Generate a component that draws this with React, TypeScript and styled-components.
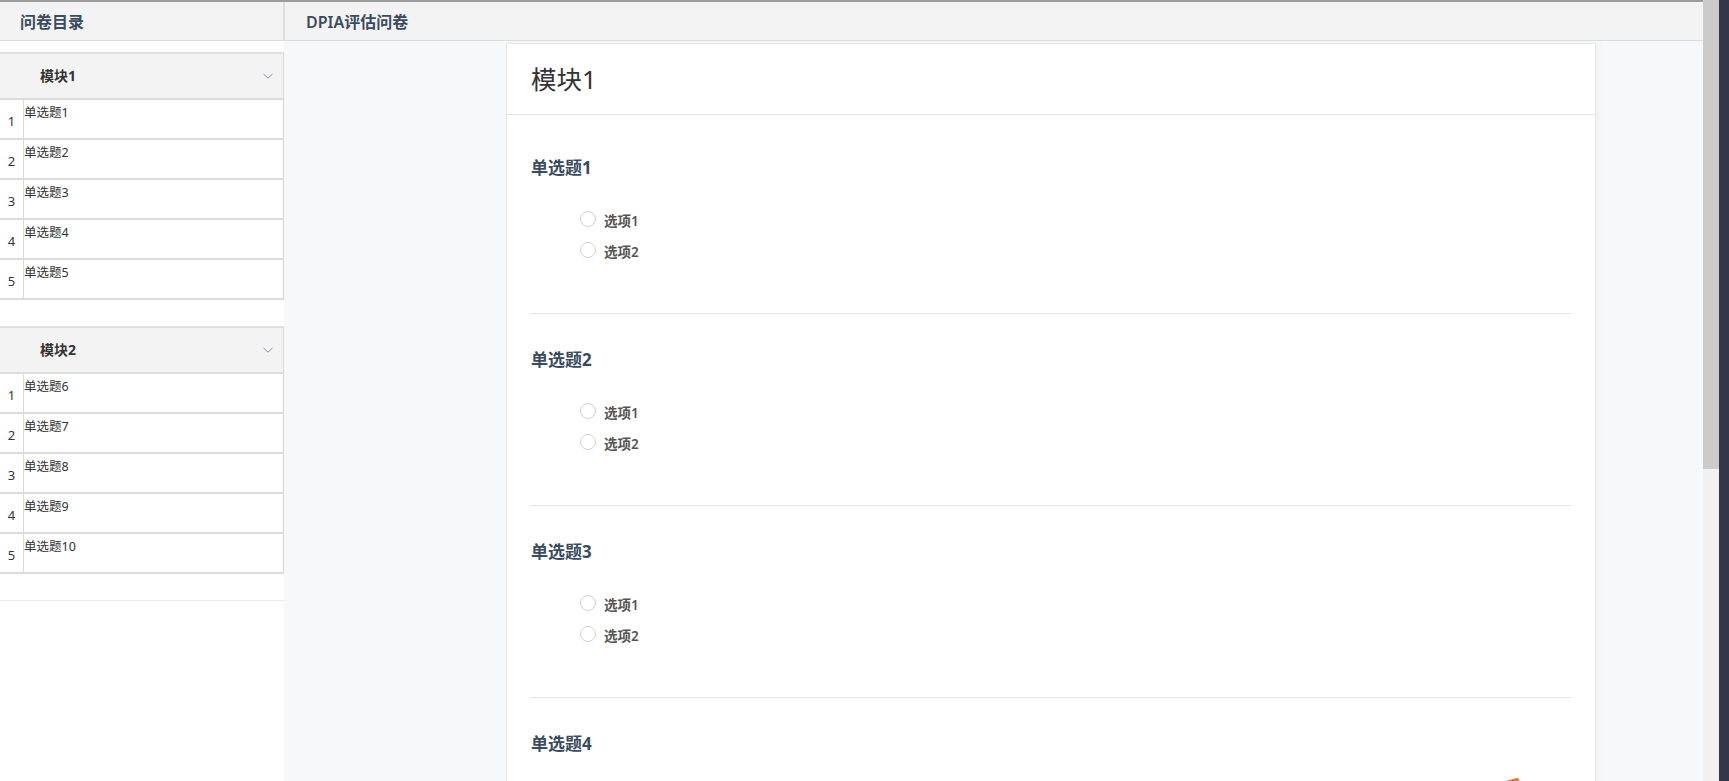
import React from "react";
import styled, { createGlobalStyle } from "styled-components";

const GlobalStyle = createGlobalStyle`
  html, body {
    margin: 0;
    padding: 0;
    height: 100%;
    overflow: hidden;
    background: #ffffff;
  }
  * { box-sizing: border-box; }
  body {
    font-family: "Noto Sans", "Noto Sans CJK SC", sans-serif;
    color: #333;
  }
`;

const Page = styled.div`
  display: flex;
  height: 781px;
  width: 1729px;
  position: relative;
  overflow: hidden;
`;

const Frame = styled.div`
  flex: 1;
  min-width: 0;
  display: flex;
  flex-direction: column;
  border-top: 2px solid #9b9b9b;
`;

const TopBar = styled.div`
  display: flex;
  height: 39px;
  background: #f3f3f3;
  border-bottom: 1px solid #dcdcdc;
  flex-shrink: 0;
`;

const TopCell = styled.div<{ $width?: number; $pad: number }>`
  display: flex;
  align-items: center;
  padding: 2px 0 0 ${(p) => p.$pad}px;
  ${(p) => (p.$width ? `width: ${p.$width}px; border-right: 2px solid #dedede;` : "flex: 1;")}
  font-size: 16px;
  font-weight: 600;
  color: #3a4b5f;
  line-height: 20px;
`;

const Body = styled.div`
  flex: 1;
  min-height: 0;
  display: flex;
`;

const Sidebar = styled.div`
  width: 284px;
  flex-shrink: 0;
  background: #ffffff;
  padding-top: 11px;
  display: flex;
  flex-direction: column;
`;

const ModuleBlock = styled.div`
  display: flex;
  flex-direction: column;
  margin-bottom: 26px;
  &:last-of-type { margin-bottom: 23px; }
`;

const ModuleHeader = styled.div`
  height: 48px;
  display: flex;
  align-items: center;
  justify-content: space-between;
  background: #f3f3f3;
  border-top: 2px solid #e0e0e0;
  border-bottom: 2px solid #dcdcdc;
  border-right: 1px solid #d9d9d9;
  padding: 0 9px 0 40px;
  font-size: 14px;
  font-weight: 700;
  color: #333;
  line-height: 20px;
`;

const Row = styled.div`
  display: grid;
  grid-template-columns: 24px 1fr;
  height: 40px;
  border-bottom: 2px solid #dcdcdc;
  border-right: 1px solid #d6d6d6;
  background: #fff;
`;

const RowNum = styled.div`
  display: flex;
  align-items: center;
  justify-content: center;
  padding-top: 4px;
  border-right: 1px solid #d9d9d9;
  font-size: 13px;
  color: #333;
`;

const RowText = styled.div`
  padding: 4px 0 0 0;
  font-size: 12.5px;
  line-height: 18px;
  color: #333;
`;

const SideDivider = styled.div`
  height: 1px;
  background: #e8e9ee;
`;

const Main = styled.div`
  flex: 1;
  min-width: 0;
  background: #f7f8fa;
  padding: 2px 0 0 222px;
  overflow: hidden;
`;

const Card = styled.div`
  width: 1090px;
  background: #ffffff;
  border: 1px solid #e8e8e8;
  border-bottom: none;
  box-shadow: 3px 0 6px rgba(0, 0, 0, 0.03);
  min-height: 100%;
`;

const CardHeader = styled.div`
  height: 71px;
  border-bottom: 1px solid #e5e5e5;
  padding: 17px 0 0 24px;
  font-size: 25.5px;
  line-height: 36px;
  color: #333;
  font-weight: 400;
`;

const CardBody = styled.div`
  padding: 7px 24px 0 23px;
`;

const Section = styled.div`
  padding: 34px 0 48px 1px;
  border-bottom: 1px solid #e5e5e5;
`;

const QuestionTitle = styled.div`
  font-size: 17px;
  font-weight: 700;
  line-height: 24px;
  color: #3a4b5f;
  margin-bottom: 26px;
`;

const Options = styled.div`
  display: flex;
  flex-direction: column;
  gap: 3px;
  padding-left: 49px;
`;

const Option = styled.label`
  display: flex;
  align-items: center;
  height: 28px;
  gap: 8px;
  font-size: 13.5px;
  font-weight: 600;
  color: #555;
`;

const RadioCircle = styled.span`
  width: 16px;
  height: 16px;
  border-radius: 50%;
  border: 1px solid #d0d0d0;
  background: #fff;
  margin-top: -3px;
`;

const OptionLabel = styled.span`
  line-height: 18px;
  padding-top: 2px;
`;

const ScrollTrack = styled.div`
  width: 16px;
  flex-shrink: 0;
  background: #f1f1f1;
  display: flex;
  flex-direction: column;
`;

const ScrollThumb = styled.div`
  height: 469px;
  background: #cbcbcb;
`;

const EdgeStrip = styled.div`
  width: 10px;
  flex-shrink: 0;
  background: #343746;
`;

const FloatMark = styled.svg`
  position: absolute;
  left: 1500px;
  top: 775px;
`;

const modules = [
  { name: "模块1", items: ["单选题1", "单选题2", "单选题3", "单选题4", "单选题5"] },
  { name: "模块2", items: ["单选题6", "单选题7", "单选题8", "单选题9", "单选题10"] },
];

const Chevron = () => (
  <svg width="12" height="12" viewBox="0 0 12 12" fill="none">
    <path d="M1.5 4 L6 8.2 L10.5 4" stroke="#8a8f99" strokeWidth="1" />
  </svg>
);

export default function App() {
  return (
    <>
      <GlobalStyle />
      <Page>
        <Frame>
          <TopBar>
            <TopCell $width={285} $pad={20}>问卷目录</TopCell>
            <TopCell $pad={21}>DPIA评估问卷</TopCell>
          </TopBar>
          <Body>
            <Sidebar>
              {modules.map((m) => (
                <ModuleBlock key={m.name}>
                  <ModuleHeader>
                    <span>{m.name}</span>
                    <Chevron />
                  </ModuleHeader>
                  {m.items.map((it, i) => (
                    <Row key={it}>
                      <RowNum>{i + 1}</RowNum>
                      <RowText>{it}</RowText>
                    </Row>
                  ))}
                </ModuleBlock>
              ))}
              <SideDivider />
            </Sidebar>
            <Main>
              <Card>
                <CardHeader>模块1</CardHeader>
                <CardBody>
                  {modules[0].items.map((q) => (
                    <Section key={q}>
                      <QuestionTitle>{q}</QuestionTitle>
                      <Options>
                        <Option>
                          <RadioCircle />
                          <OptionLabel>选项1</OptionLabel>
                        </Option>
                        <Option>
                          <RadioCircle />
                          <OptionLabel>选项2</OptionLabel>
                        </Option>
                      </Options>
                    </Section>
                  ))}
                </CardBody>
              </Card>
            </Main>
          </Body>
        </Frame>
        <ScrollTrack>
          <ScrollThumb />
        </ScrollTrack>
        <EdgeStrip />
        <FloatMark width="22" height="8" viewBox="0 0 22 8">
          <path d="M3 7 C8 5 13 4 16 3.2 L18.5 3 L19 7 Z" fill="#f26b36" />
        </FloatMark>
      </Page>
    </>
  );
}
